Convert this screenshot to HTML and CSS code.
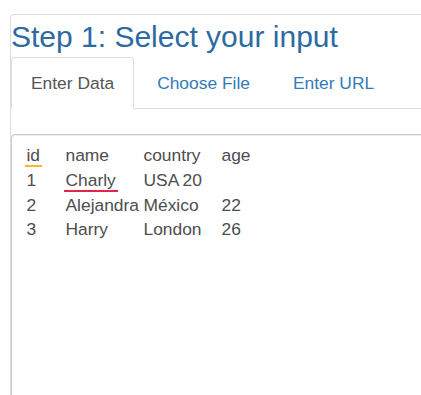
FILE: index.html
```html
<!DOCTYPE html>
<html>
<head>
<meta charset="utf-8">
<link rel="stylesheet" href="styles.css">
</head>
<body>
<div class="page">
  <div class="panel">
    <h2 class="title">Step 1: Select your input</h2>
    <ul class="tabs">
      <li class="tab active"><a>Enter Data</a></li>
      <li class="tab"><a>Choose File</a></li>
      <li class="tab"><a>Enter URL</a></li>
    </ul>
    <div class="tab-body">
      <div class="data-box"><span class="mark-warn">id</span>	name	country	age
1	<span class="mark-err">Charly</span>	USA	20
2	Alejandra	México	22
3	Harry	London	26</div>
    </div>
  </div>
</div>
</body>
</html>
```
FILE: styles.css
```css
html, body {
  margin: 0;
  padding: 0;
  overflow: hidden;
  background: #fff;
}
body {
  font-family: "Liberation Sans", Arial, sans-serif;
}
.page {
  width: 421px;
  height: 395px;
  overflow: hidden;
  padding: 14px 0 0 10px;
  box-sizing: border-box;
}
.panel {
  width: 460px;
  height: 420px;
  border: 1px solid #ddd;
  border-radius: 4px 0 0 0;
  box-sizing: border-box;
  padding-top: 5px;
}
.title {
  margin: 0 0 4px 0;
  font-size: 30px;
  line-height: 33px;
  font-weight: normal;
  color: #2c6aa2;
}
.tabs {
  list-style: none;
  margin: 0;
  padding: 0;
  display: flex;
  border-bottom: 1px solid #ddd;
}
.tab {
  margin-right: 3px;
  margin-bottom: -1px;
}
.tab a {
  display: block;
  padding: 12.5px 19px 12.5px 19px;
  font-size: 17.4px;
  line-height: 24.86px;
  color: #337ab7;
  border: 1px solid transparent;
  border-radius: 4px 4px 0 0;
}
.tab.active a {
  color: #555;
  background: #fff;
  border-color: #ddd #ddd transparent #ddd;
}
.tab-body {
  padding-top: 25px;
}
.data-box {
  height: 300px;
  border: 1px solid #ccc;
  border-right: none;
  border-radius: 4px 0 0 0;
  box-shadow: inset 0 1px 1px rgba(0,0,0,0.075);
  padding: 8px 14px 8px 14.5px;
  font-size: 17.4px;
  line-height: 24.86px;
  color: #4d4d4d;
  white-space: pre;
  tab-size: 39px;
}
.mark-warn {
  border-bottom: 2px solid #f2bb2e;
  padding: 0 2px;
  margin: 0 -2px;
}
.mark-err {
  border-bottom: 2px solid #e5234d;
  padding: 0 2px;
  margin: 0 -2px;
}
```
